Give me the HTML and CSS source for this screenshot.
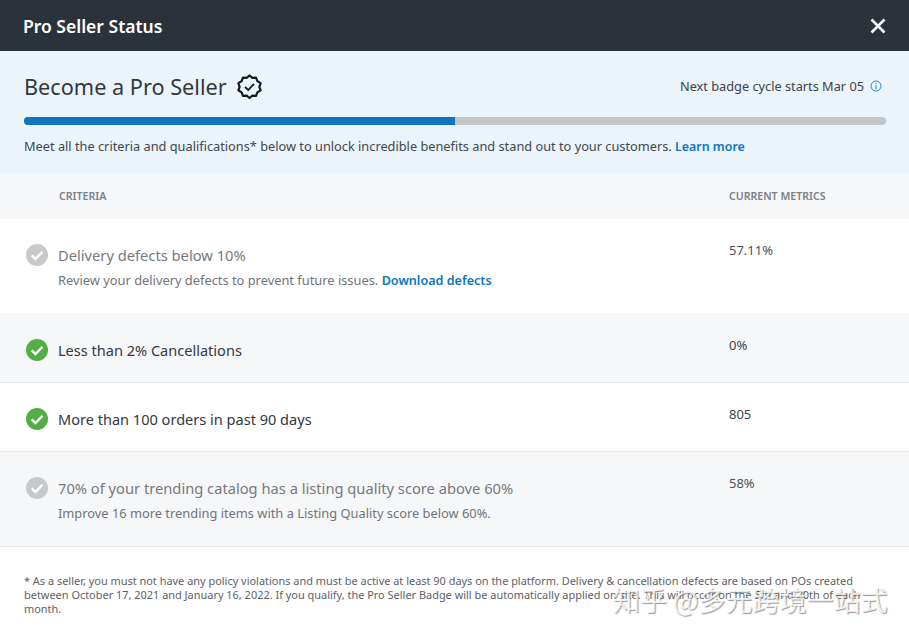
FILE: index.html
```html
<!DOCTYPE html>
<html lang="en">
<head>
<meta charset="utf-8">
<title>Pro Seller Status</title>
<link rel="stylesheet" href="styles.css">
</head>
<body>
<div class="modal">
  <header class="topbar">
    <h1 class="topbar-title">Pro Seller Status</h1>
    <svg class="close" width="16" height="16" viewBox="0 0 16 16"><path d="M1.5 1.5 14.5 14.5M14.5 1.5 1.5 14.5" stroke="#fff" stroke-width="2.6" fill="none"/></svg>
  </header>
  <section class="hero">
    <div class="hero-top">
      <div class="hero-heading">
        <h2 class="hero-title">Become a Pro Seller</h2>
        <svg class="badge" width="25" height="25" viewBox="0 0 25 25"><path d="M12.5 1.5 15.4 3.9 19 3.6 20.4 7.1 23.6 9.2 22.4 12.8 23.6 16.3 20.4 18.4 19 21.9 15.4 21.6 12.5 24 9.6 21.6 6 21.9 4.6 18.4 1.4 16.3 2.6 12.8 1.4 9.2 4.6 7.1 6 3.6 9.6 3.9Z" fill="none" stroke="#16191d" stroke-width="2.2" stroke-linejoin="round"/><path d="M8 13 11.2 16 17 9.8" fill="none" stroke="#16191d" stroke-width="1.8"/></svg>
      </div>
      <div class="cycle">
        <span>Next badge cycle starts Mar 05</span>
        <svg class="info" width="12" height="12" viewBox="0 0 12 12"><circle cx="6" cy="6" r="5" fill="none" stroke="#2b8ac6" stroke-width="1"/><path d="M6 5.2V9M6 3V4.2" stroke="#2b8ac6" stroke-width="1.1"/></svg>
      </div>
    </div>
    <div class="progress"><div class="progress-fill" style="width:50%"></div></div>
    <p class="hero-text">Meet all the criteria and qualifications* below to unlock incredible benefits and stand out to your customers. <a class="link" href="#">Learn more</a></p>
  </section>
  <div class="table-head">
    <span class="col-main">CRITERIA</span>
    <span class="col-metric">CURRENT METRICS</span>
  </div>
  <div class="row row-tall row-plain">
    <div class="col-main row-main">
      <svg class="check" width="22" height="22" viewBox="0 0 22 22"><circle cx="11" cy="11" r="11" fill="#c8c9cb"/><path d="M5.8 11.3 9.4 15 16.4 7.8" fill="none" stroke="#fff" stroke-width="2.4"/></svg>
      <div>
        <div class="row-title muted">Delivery defects below 10%</div>
        <div class="row-sub">Review your delivery defects to prevent future issues. <a class="link link-sub" href="#">Download defects</a></div>
      </div>
    </div>
    <div class="col-metric metric muted-metric">57.11%</div>
  </div>
  <div class="row row-short alt">
    <div class="col-main row-main">
      <svg class="check" width="22" height="22" viewBox="0 0 22 22"><circle cx="11" cy="11" r="11" fill="#52ae45"/><path d="M5.8 11.3 9.4 15 16.4 7.8" fill="none" stroke="#fff" stroke-width="2.4"/></svg>
      <div class="row-title">Less than 2% Cancellations</div>
    </div>
    <div class="col-metric metric">0%</div>
  </div>
  <div class="row row-short">
    <div class="col-main row-main">
      <svg class="check" width="22" height="22" viewBox="0 0 22 22"><circle cx="11" cy="11" r="11" fill="#52ae45"/><path d="M5.8 11.3 9.4 15 16.4 7.8" fill="none" stroke="#fff" stroke-width="2.4"/></svg>
      <div class="row-title">More than 100 orders in past 90 days</div>
    </div>
    <div class="col-metric metric">805</div>
  </div>
  <div class="row row-tall alt">
    <div class="col-main row-main">
      <svg class="check" width="22" height="22" viewBox="0 0 22 22"><circle cx="11" cy="11" r="11" fill="#c8c9cb"/><path d="M5.8 11.3 9.4 15 16.4 7.8" fill="none" stroke="#fff" stroke-width="2.4"/></svg>
      <div>
        <div class="row-title muted">70% of your trending catalog has a listing quality score above 60%</div>
        <div class="row-sub">Improve 16 more trending items with a Listing Quality score below 60%.</div>
      </div>
    </div>
    <div class="col-metric metric muted-metric">58%</div>
  </div>
  <footer class="note">* As a seller, you must not have any policy violations and must be active at least 90 days on the platform. Delivery &amp; cancellation defects are based on POs created between October 17, 2021 and January 16, 2022. If you qualify, the Pro Seller Badge will be automatically applied on site. This will occur on the 5th and 20th of each month.</footer>
  <div class="watermark">知乎 @多元跨境一站式</div>
</div>
</body>
</html>
```
FILE: styles.css
```css
* { box-sizing: border-box; }
html, body { margin: 0; padding: 0; }
body { background: #fff; font-family: "Noto Sans", "Open Sans", sans-serif; color: #2e3339; }
h1, h2, p { margin: 0; font-weight: normal; }
.modal { position: relative; width: 909px; height: 637px; overflow: hidden; }
.topbar { height: 51px; background: #2c323a; display: flex; align-items: center; justify-content: space-between; padding: 0 23px; }
.topbar-title { color: #fff; font-size: 17.5px; font-weight: 600; }
.hero { height: 122px; background: #ebf4fb; padding: 0 23px 0 24px; }
.hero-top { height: 66px; display: flex; align-items: center; justify-content: space-between; padding-top: 6px; }
.hero-heading { display: flex; align-items: center; gap: 10px; padding-bottom: 2px; }
.hero-title { font-size: 21.7px; color: #32383f; }
.badge { display: block; }
.cycle { display: flex; align-items: center; gap: 6px; font-size: 12.75px; color: #3c4249; padding: 0 4px 2px 0; }
.progress { height: 8px; border-radius: 4px; background: #c3c5c6; overflow: hidden; }
.progress-fill { height: 8px; background: #0d76bd; }
.hero-text { margin-top: 11px; font-size: 12.78px; line-height: 20px; color: #41474e; }
.link { color: #0d76bd; text-decoration: none; font-weight: 600; font-size: 12.4px; }
.link-sub { font-size: 12.6px; }
.table-head { height: 46px; background: #f6f7f9; display: flex; align-items: center; font-size: 10.6px; font-weight: 600; color: #7b8087; }
.table-head .col-main { padding-left: 59px; }
.col-main { width: 729px; flex: none; }
.col-metric { flex: 1; }
.row { display: flex; border-bottom: 1px solid #e6e8eb; background: #fff; }
.row-plain { border-bottom-color: #f4f5f7; }
.alt { background: #f6f7f9; }
.row-tall { height: 95px; }
.row-short { height: 69px; }
.row-main { display: flex; align-items: flex-start; gap: 10px; padding-left: 26px; padding-top: 25px; }
.check { flex: none; }
.row-title { font-size: 14.55px; line-height: 22px; color: #33383e; }
.row-title.muted { font-size: 14.7px; color: #75797e; }
.row-sub { font-size: 12.85px; line-height: 20px; margin-top: 4px; color: #71757a; }
.metric { font-size: 13px; line-height: 18px; color: #3c4249; padding-top: 22px; }
.muted-metric { color: #4c5157; }
.note { padding: 27px 40px 0 24px; font-size: 10.95px; line-height: 14px; color: #5d6167; }
.watermark { position: absolute; left: 613px; top: 582px; font-family: "Noto Sans CJK SC", sans-serif; font-size: 27px; line-height: 36px; color: rgba(255,255,255,0.8); text-shadow: 1px 1px 1px rgba(90,90,90,0.6); white-space: nowrap; }
```
